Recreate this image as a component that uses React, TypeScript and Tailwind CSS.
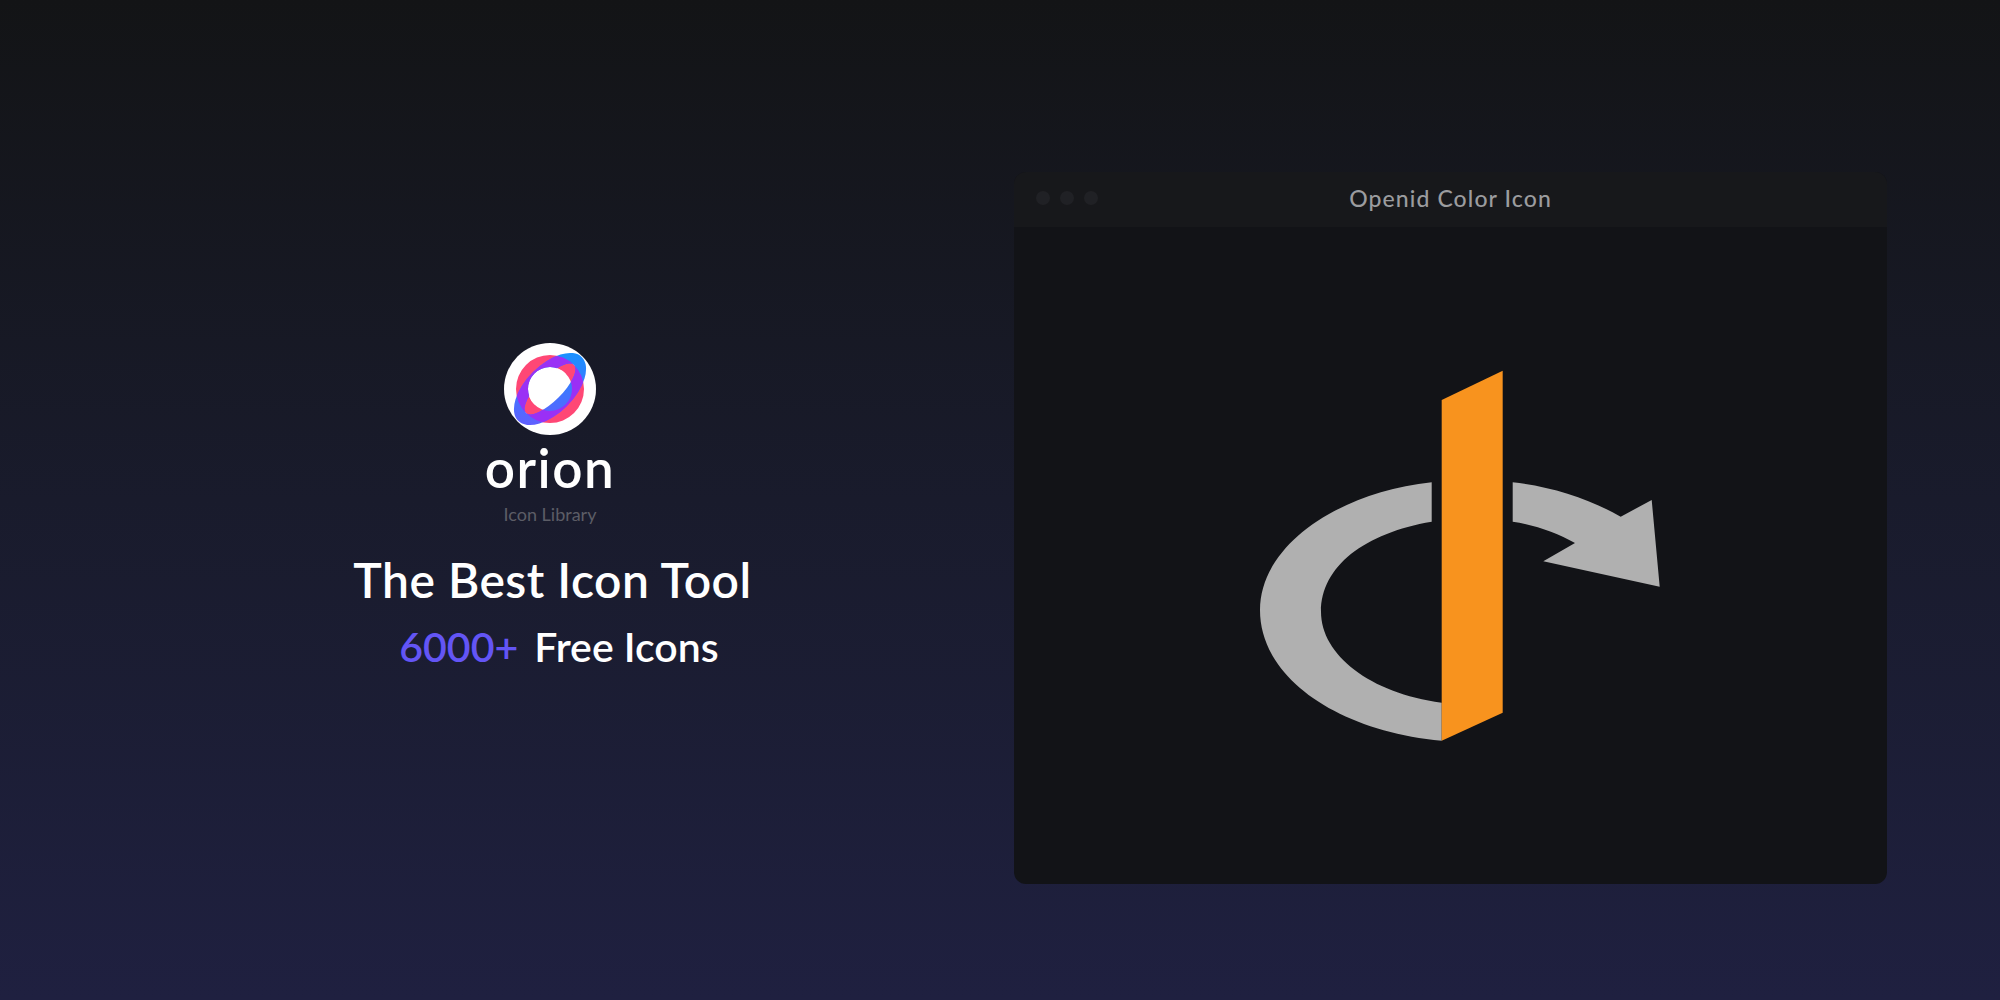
const ringPath = "M1 46a45 24 0 1 0 90 0a45 24 0 1 0-90 0ZM12 46a34 12 0 1 1 68 0a34 12 0 1 1-68 0Z";

const Logo = () => (
  <svg width="92" height="92" viewBox="0 0 92 92">
    <defs>
      <linearGradient id="ring" x1="82" y1="10" x2="10" y2="82" gradientUnits="userSpaceOnUse">
        <stop offset="0" stopColor="#0a9bff" />
        <stop offset="1" stopColor="#6f55ff" />
      </linearGradient>
      <clipPath id="annulus">
        <path
          clipRule="evenodd"
          d="M46 12a34 34 0 1 0 0 68a34 34 0 1 0 0-68ZM46 24a22 22 0 1 1 0 44a22 22 0 1 1 0-44Z"
        />
      </clipPath>
    </defs>
    <circle cx="46" cy="46" r="46" fill="#fff" />
    <path
      fillRule="evenodd"
      fill="#ff4775"
      d="M46 12a34 34 0 1 0 0 68a34 34 0 1 0 0-68ZM46 24a22 22 0 1 1 0 44a22 22 0 1 1 0-44Z"
    />
    <g transform="rotate(-45 46 46)">
      <path fillRule="evenodd" fill="url(#ring)" d={ringPath} />
      {/* ring passes behind the planet on its upper side */}
      <path fill="#fff" d="M24 46a22 22 0 0 1 44 0Z" />
    </g>
    <g clipPath="url(#annulus)">
      <g transform="rotate(-45 46 46)">
        <path fillRule="evenodd" fill="#9a30f5" d={ringPath} />
      </g>
    </g>
  </svg>
);

const OpenIdMark = () => (
  <svg width="440" height="400" viewBox="0 0 440 400">
    <path
      fill="#b0b0b0"
      d="M191.7 122.3C95 133 20 187 20 250C20 318 98 371 201.7 380.7L201.7 342.7C130 333 81 295 81 251.7C81 206 125 173 191.7 161.7Z"
    />
    <path
      fill="#b0b0b0"
      d="M272.7 122.3C310 126 350 139 380.7 156.7L411.7 140L419.7 226.7L303.3 201.3L335 183C317 173 296 165 272.7 161.7Z"
    />
    <path fill="#f8931e" d="M201.7 40L262.7 10.7L262.7 352.7L201.7 380.7Z" />
  </svg>
);

export default function App() {
  return (
    <div className="flex h-[1000px] w-[2000px] bg-gradient-to-b from-[#131416] via-[#191b2c] to-[#1f2040] pt-[172px] font-['Lato',sans-serif]">
      <div className="ml-[300px] flex w-[500px] flex-col items-center pt-[171px]">
        <Logo />
        <div className="mt-[3px] text-[53px] leading-[60px] font-semibold tracking-[1.5px] text-white">orion</div>
        <div className="mt-[4px] text-[18px] leading-[24px] text-[#5c5d66]">Icon Library</div>
        <div className="mt-[24px] ml-[5px] text-[48px] leading-[60px] font-semibold tracking-[0.5px] text-white">The Best Icon Tool</div>
        <div className="mt-[12px] ml-[18px] flex gap-[16px] text-[41px] leading-[50px] font-semibold text-white">
          <span className="text-[#6355f5]">6000+</span>
          <span>Free Icons</span>
        </div>
      </div>
      <div className="ml-[214px] flex h-[712px] w-[873px] flex-col overflow-hidden rounded-[12px] bg-[#121317]">
        <div className="relative flex h-[55px] shrink-0 items-center justify-center bg-[#17181b]">
          <div className="absolute top-[19px] left-[22px] flex gap-[10px]">
            <span className="h-[14px] w-[14px] rounded-full bg-[#202125]" />
            <span className="h-[14px] w-[14px] rounded-full bg-[#202125]" />
            <span className="h-[14px] w-[14px] rounded-full bg-[#202125]" />
          </div>
          <span className="mb-[3px] text-[23px] font-medium tracking-[1.1px] text-[#9b9c9f]">Openid Color Icon</span>
        </div>
        <div className="flex flex-1 items-center justify-center pt-[9px] pl-[18px]">
          <OpenIdMark />
        </div>
      </div>
    </div>
  );
}
